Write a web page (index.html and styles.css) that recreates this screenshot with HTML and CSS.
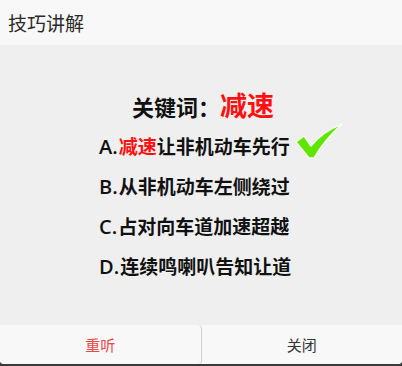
FILE: index.html
```html
<!DOCTYPE html>
<html lang="zh-CN">
<head>
  <meta charset="UTF-8">
  <meta name="viewport" content="width=device-width, initial-scale=1.0">
  <title>技巧讲解</title>
  <link rel="stylesheet" href="styles.css">
</head>
<body>
  <div class="dialog">
    <div class="dialog-header">技巧讲解</div>
    <div class="dialog-body">
      <div class="keyword">关键词：<span class="red big">减速</span></div>
      <div class="options">
        <div class="option"><span class="tag">A.</span><span class="red">减速</span>让非机动车先行
          <svg class="check" width="48" height="36" viewBox="0 0 48 36">
            <path d="M1 19 L9 13 L16 23 C24 13 34 6 47 1 C37 10 27 21 19 35 L14 35 Z" fill="#5fe600" stroke="#f4fff0" stroke-width="1.5" stroke-linejoin="round"/>
          </svg>
        </div>
        <div class="option"><span class="tag">B.</span>从非机动车左侧绕过</div>
        <div class="option"><span class="tag">C.</span>占对向车道加速超越</div>
        <div class="option"><span class="tag">D.</span>连续鸣喇叭告知让道</div>
      </div>
    </div>
    <div class="dialog-footer">
      <div class="btn btn-replay">重听</div>
      <div class="btn btn-close">关闭</div>
    </div>
  </div>
</body>
</html>
```

FILE: styles.css
```css
body {
  margin: 0;
  background: #3a3a3a;
  font-family: "Open Sans", "Noto Sans CJK SC", sans-serif;
}
.dialog {
  height: 364px;
  display: flex;
  flex-direction: column;
  background: #efefef;
  border-radius: 0 0 4px 4px;
  overflow: hidden;
}
.dialog-header {
  height: 45px;
  line-height: 45px;
  padding-left: 8px;
  background: #f8f8f8;
  color: #2a2a2a;
  font-size: 19px;
  font-family: "Noto Sans CJK SC", sans-serif;
}
.dialog-body {
  flex: 1;
  padding-top: 41px;
}
.keyword {
  text-align: center;
  line-height: 40px;
  height: 40px;
  font-size: 22px;
  font-weight: bold;
  color: #111;
  padding-left: 4px;
}
.red {
  color: #ff1010;
}
.big {
  font-size: 27px;
}
.options {
  padding-left: 99px;
}
.option {
  display: flex;
  align-items: center;
  height: 40px;
  font-size: 19px;
  font-weight: bold;
  color: #111;
}
.tag {
  font-weight: 600;
  font-size: 20px;
  margin-right: 1px;
}
.check {
  margin-left: 5px;
  margin-top: -10px;
}
.dialog-footer {
  height: 39px;
  display: flex;
  background: #f8f8f8;
}
.btn {
  flex: 1;
  text-align: center;
  line-height: 39px;
  font-size: 15px;
  font-family: "Noto Sans CJK SC", sans-serif;
}
.btn-replay {
  color: #e84a4a;
  border-right: 1px solid #d0d0d0;
  border-radius: 0 4px 4px 4px;
}
.btn-close {
  color: #333;
}
```
